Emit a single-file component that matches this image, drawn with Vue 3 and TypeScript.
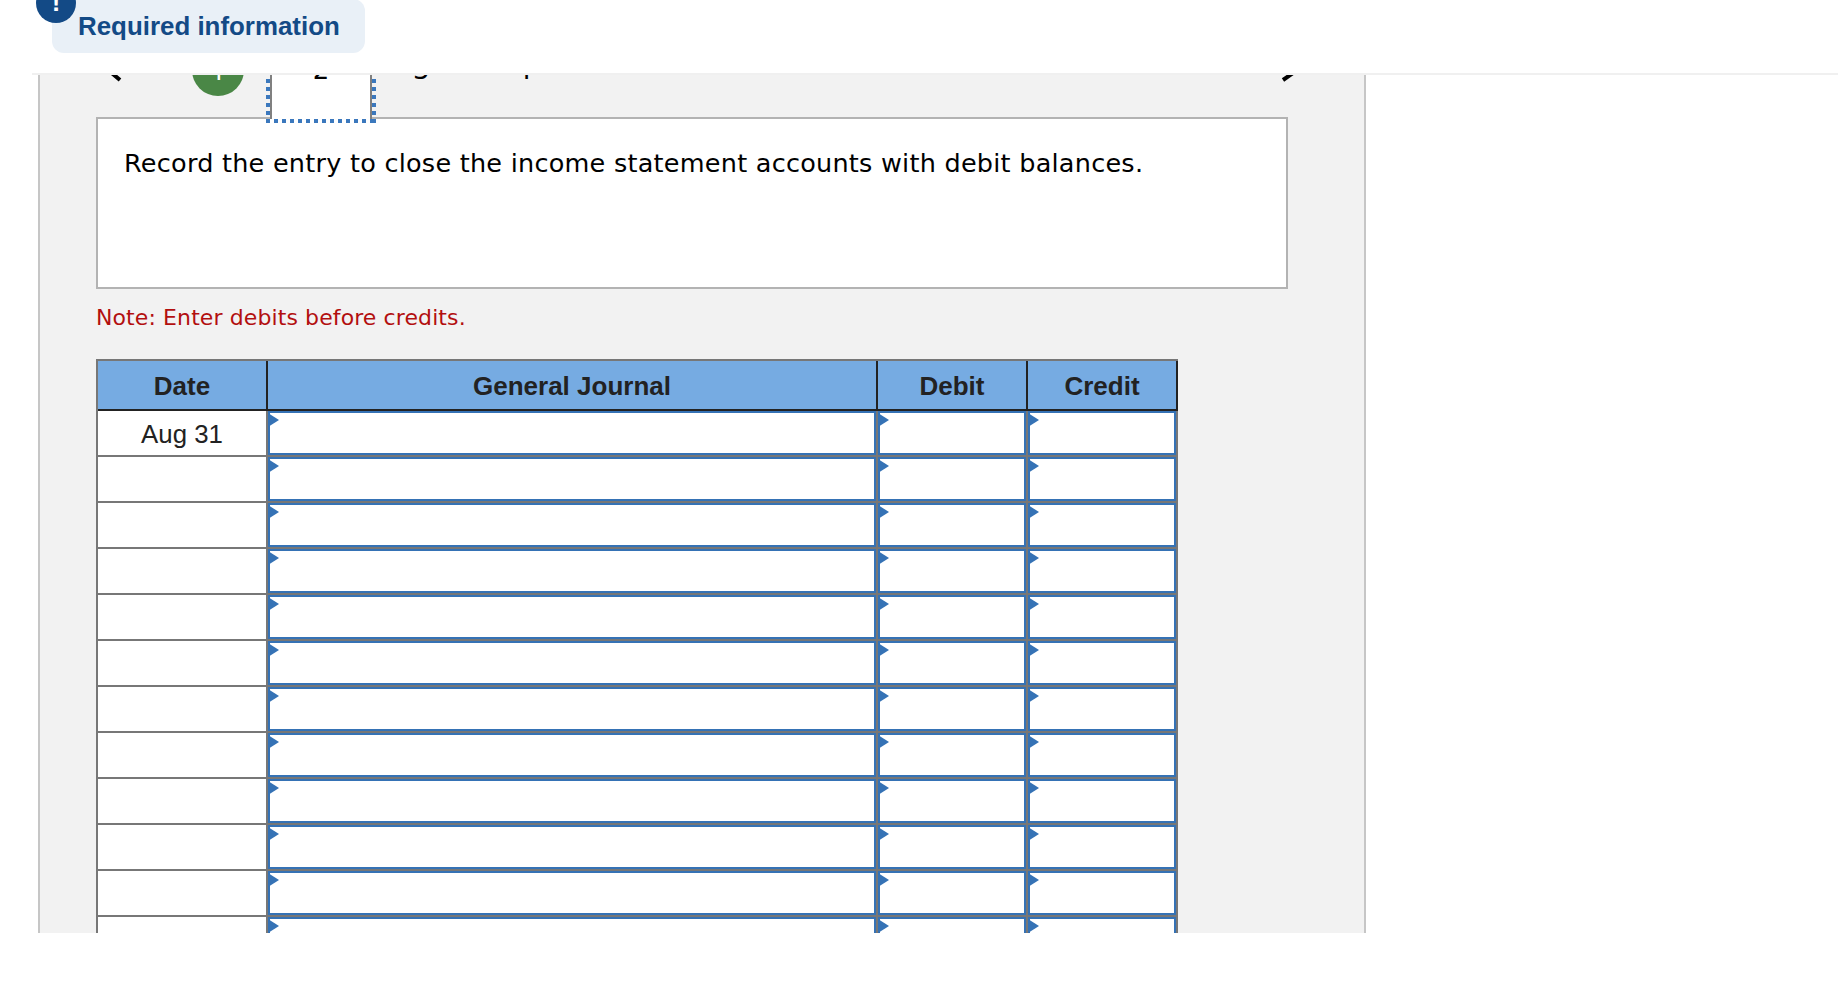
<script setup lang="ts">
const rows: string[] = ['Aug 31', '', '', '', '', '', '', '', '', '', '', '']
const heads: string[] = ['Date', 'General Journal', 'Debit', 'Credit']
</script>

<template>
  <div class="page">
    <header class="topbar">
      <span class="alert">!</span>
      <div class="pill">Required information</div>
    </header>
    <main class="panel">
      <nav class="steps">
        <svg class="chev chev-l" width="16" height="26" viewBox="0 0 16 26"><path d="M14 3 1 13l13 11" fill="none" stroke="#000" stroke-width="4" /></svg>
        <span class="done">1</span>
        <span class="tab"><span class="tab-in">2</span></span>
        <span class="num n3">3</span>
        <span class="num n4">4</span>
        <svg class="chev chev-r" width="18" height="26" viewBox="0 0 18 26"><path d="M2 3l15 10.5L2 24" fill="none" stroke="#000" stroke-width="4" /></svg>
      </nav>
      <section class="prompt">Record the entry to close the income statement accounts with debit balances.</section>
      <p class="note">Note: Enter debits before credits.</p>
      <div class="journal">
        <div v-for="h in heads" :key="h" class="th">{{ h }}</div>
        <template v-for="(r, i) in rows" :key="i">
          <div class="date">{{ r }}</div>
          <div class="cell"><span class="box"></span></div>
          <div class="cell"><span class="box"></span></div>
          <div class="cell"><span class="box"></span></div>
        </template>
      </div>
    </main>
  </div>
</template>

<style>
html, body { margin: 0; background: #fff; overflow: hidden; }
</style>

<style scoped>
.page { width: 1838px; height: 982px; overflow: hidden; font-family: "Liberation Sans", Arial, sans-serif; }
.topbar {
  position: relative; z-index: 3; height: 72px; margin-left: 32px; background: #fff;
  border-bottom: 2px solid #f0f0f0;
  padding-top: 1px;
}
.alert {
  position: absolute; left: 4px; top: -17px; width: 40px; height: 40px; border-radius: 50%; z-index: 1;
  background: #134a86; color: #fff; font-weight: 700; font-size: 26px; line-height: 38px; text-align: center;
}
.pill {
  width: 287px; height: 54px; margin: -2px 0 0 20px; padding-left: 26px; border-radius: 12px;
  background: #e9f0f7; color: #134a86; font-size: 25.9px; font-weight: 700; line-height: 54px;
}
.panel {
  box-sizing: border-box; width: 1328px; height: 858px; margin-left: 38px; padding-left: 56px;
  overflow: hidden; background: #f2f2f2; border-left: 2px solid #c6c6c6; border-right: 2px solid #c6c6c6;
}
.steps {
  position: relative; z-index: 1; display: flex; align-items: flex-start; width: 1191px; height: 83px;
  margin: -35px 0 0 -56px; font-family: "DejaVu Sans", sans-serif; font-size: 26px; line-height: 30px;
}
.chev { flex: none; margin-top: 16px; }
.chev-l { margin-left: 66px; }
.done {
  flex: none; width: 52px; height: 52px; margin: 4px 0 0 70px; border-radius: 50%; background: #4a8746; color: #fff;
  font-family: Roboto, sans-serif; text-align: center; line-height: 54px;
}
.tab {
  flex: none; box-sizing: border-box; width: 110px; height: 83px; margin-left: 22px; padding: 0 4px 4px;
  background:
    repeating-linear-gradient(to top, #3b78bd 0 4px, transparent 4px 8px) left bottom / 4px 100% no-repeat,
    repeating-linear-gradient(to top, #3b78bd 0 4px, transparent 4px 8px) right bottom / 4px 100% no-repeat,
    repeating-linear-gradient(to right, #3b78bd 0 4px, transparent 4px 8px) left bottom / 100% 4px no-repeat;
}
.tab-in {
  display: block; box-sizing: border-box; height: 79px; padding-top: 15px; background: #fff; text-align: center;
  border-left: 2px solid #808080; border-right: 2px solid #808080; color: #000;
}
.num { flex: none; padding-top: 15px; color: #000; }
.n3 { margin-left: 37px; }
.n4 { margin-left: 86px; }
.chev-r { margin-left: 749px; }
.prompt {
  box-sizing: border-box; width: 1192px; height: 172px; margin-top: -6px; padding: 28px 26px;
  background: #fff; border: 2px solid #b3b3b3; color: #000; font-family: "DejaVu Sans", sans-serif; font-size: 25.5px; letter-spacing: 0.25px; line-height: 32px;
}
.note {
  margin: 15px 0 0; color: #b30f0f; font-family: "DejaVu Sans", sans-serif; font-size: 22px; letter-spacing: 0.1px; line-height: 28px;
}
.journal {
  display: grid; grid-template-columns: 170px 610px 150px 150px; grid-auto-rows: 46px; grid-template-rows: 50px;
  width: 1082px; margin-top: 27px; box-sizing: border-box;
  border-top: 2px solid #777; border-left: 2px solid #777;
}
.th {
  box-sizing: border-box; background: #76abe2; color: #222; font-size: 26px; font-weight: 700; text-align: center;
  line-height: 50px; border-right: 2px solid #222; border-bottom: 2px solid #222;
}
.date {
  box-sizing: border-box; background: #fff; color: #222; font-size: 25.8px; text-align: center; line-height: 47px;
  border-right: 2px solid #777; border-bottom: 2px solid #777;
}
.cell {
  box-sizing: border-box; display: flex; border-right: 2px solid #777; border-bottom: 2px solid #777;
}
.box {
  position: relative; flex: 1; background: #fff; border: 2px solid #3572b5;
}
.box::before {
  content: ""; position: absolute; left: -2px; top: 0; border-left: 11.5px solid #3572b5;
  border-top: 7px solid transparent; border-bottom: 7px solid transparent;
}
</style>
